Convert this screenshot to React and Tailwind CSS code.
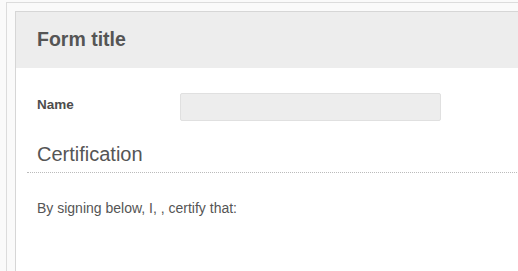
import React from "react";

const font = { fontFamily: '"Liberation Sans", Arial, sans-serif' };

export default function App() {
  return (
    <div className="h-[271px] w-[518px] overflow-hidden bg-[#fafafa] pt-[2px] pl-[6px]" style={font}>
      <div className="h-[300px] w-[560px] border-l border-t border-[#dcdcdc] bg-[#fafafa] pl-[8px] pt-[8px]">
        <div className="h-full w-[540px] border-l border-t border-[#d6d6d6] bg-white">
          <div className="flex h-[56px] items-center bg-[#ededed] pl-[21px]">
            <h1 className="text-[19.5px] font-bold leading-none text-[#555]">Form title</h1>
          </div>

          <div className="mt-[25px] flex items-start pl-[21px]">
            <label className="w-[143px] pt-[2px] text-[13.5px] font-bold leading-[20px] text-[#4d4d4d]">Name</label>
            <input
              type="text"
              className="h-[28px] w-[261px] rounded-[2px] border border-[#e0e0e0] bg-[#ededed] outline-none"
            />
          </div>

          <div className="ml-[11px] mt-[22px] border-b border-dotted border-[#bbb] pb-[7px] pl-[10px]">
            <h2 className="text-[20px] leading-[22px] text-[#555]">Certification</h2>
          </div>

          <p className="mt-[25px] pl-[21px] text-[14px] leading-[20px] text-[#555]">
            By signing below, I, , certify that:
          </p>
        </div>
      </div>
    </div>
  );
}
